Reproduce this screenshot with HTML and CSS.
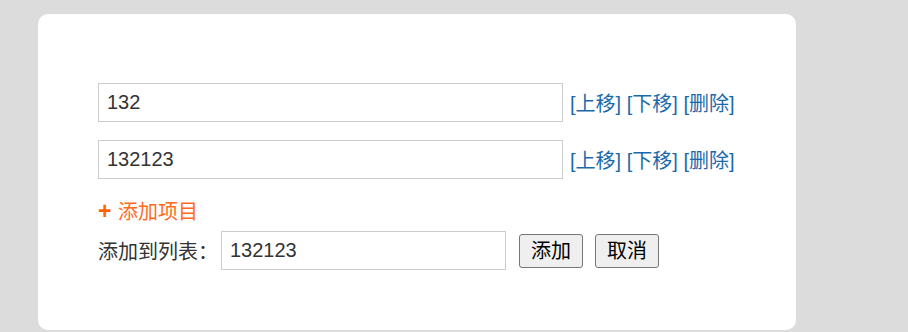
FILE: index.html
```html
<!DOCTYPE html>
<html lang="zh-CN">
<head>
<meta charset="utf-8">
<title>列表编辑</title>
<link rel="stylesheet" href="styles.css">
</head>
<body>
<div class="card">
  <div class="item-row">
    <input class="field field-item" type="text" value="132">
    <span class="ops"><a class="op" href="#">[上移]</a> <a class="op" href="#">[下移]</a> <a class="op" href="#">[删除]</a></span>
  </div>
  <div class="item-row">
    <input class="field field-item" type="text" value="132123">
    <span class="ops"><a class="op" href="#">[上移]</a> <a class="op" href="#">[下移]</a> <a class="op" href="#">[删除]</a></span>
  </div>
  <div class="add-link"><span class="plus">+</span>添加项目</div>
  <div class="add-row">
    <span class="label">添加到列表：</span>
    <input class="field field-add" type="text" value="132123">
    <button class="btn btn-ok" type="button">添加</button>
    <button class="btn" type="button">取消</button>
  </div>
</div>
</body>
</html>
```
FILE: styles.css
```css
html, body {
  margin: 0;
  padding: 0;
}
body {
  background: #dcdcdc;
  padding: 14px 0 0 38px;
  font-family: "Liberation Sans", "Noto Sans CJK SC", sans-serif;
  font-size: 20px;
  color: #333;
}
.card {
  box-sizing: border-box;
  width: 758px;
  height: 316px;
  background: #fff;
  border-radius: 10px;
  padding: 69px 60px 0 60px;
}
.item-row {
  display: flex;
  align-items: center;
  height: 39px;
  margin-bottom: 18px;
}
.field {
  box-sizing: border-box;
  flex-shrink: 0;
  height: 39px;
  border: 1px solid #cccccc;
  padding: 0 8px;
  font-family: "Liberation Sans", "Noto Sans CJK SC", sans-serif;
  font-size: 20px;
  color: #333;
  background: #fff;
  outline: none;
  margin: 0;
}
.field-item {
  width: 465px;
}
.ops {
  margin-left: 7px;
  white-space: pre;
}
.op {
  color: #1a6aab;
  text-decoration: none;
}
.add-link {
  margin-top: -1px;
  height: 30px;
  line-height: 30px;
  color: #ff6a1a;
}
.plus {
  display: inline-block;
  width: 20px;
  font-size: 23px;
  font-weight: bold;
  color: #ff6600;
}
.add-row {
  display: flex;
  align-items: center;
  height: 39px;
  margin-top: 5px;
}
.label {
  color: #333;
}
.field-add {
  width: 285px;
  margin-left: 3px;
}
.btn {
  box-sizing: border-box;
  height: 34px;
  padding: 0 11px;
  font-family: "Liberation Sans", "Noto Sans CJK SC", sans-serif;
  font-size: 20px;
  color: #000;
  background: #efefef;
  border: 1px solid #767676;
  border-radius: 3px;
  margin: 0 0 0 12px;
  line-height: 1;
}
.btn-ok {
  margin-left: 13px;
}
```
